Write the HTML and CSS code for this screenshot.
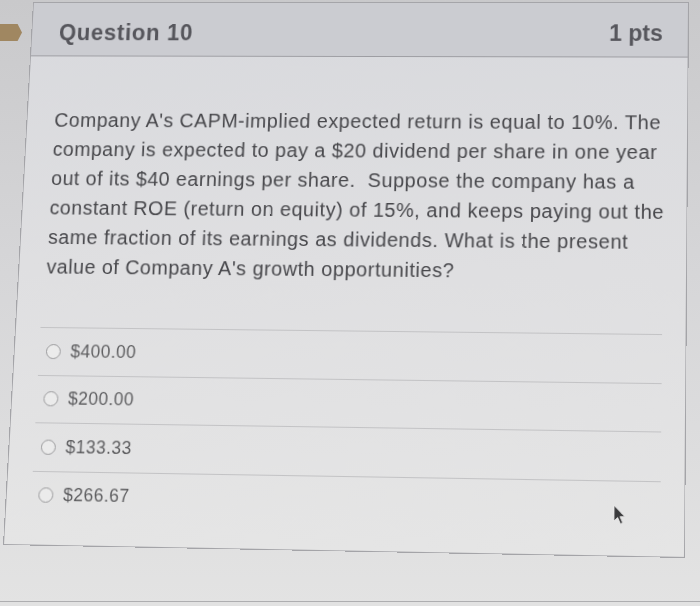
FILE: index.html
```html
<!DOCTYPE html>
<html lang="en">
<head>
<meta charset="utf-8">
<title>Question 10</title>
<link rel="stylesheet" href="styles.css">
</head>
<body>
<div class="page">
  <span class="marker"></span>
  <div class="question">
    <div class="q-header">
      <span class="q-title">Question 10</span>
      <span class="q-points">1 pts</span>
    </div>
    <div class="q-body">
      <p class="q-text">Company A's CAPM-implied expected return is equal to 10%. The company is expected to pay a $20 dividend per share in one year out of its $40 earnings per share.&nbsp; Suppose the company has a constant ROE (return on equity) of 15%, and keeps paying out the same fraction of its earnings as dividends. What is the present value of Company A's growth opportunities?</p>
      <ul class="answers">
        <li class="answer"><span class="radio"></span><span class="label">$400.00</span></li>
        <li class="answer"><span class="radio"></span><span class="label">$200.00</span></li>
        <li class="answer"><span class="radio"></span><span class="label">$133.33</span></li>
        <li class="answer"><span class="radio"></span><span class="label">$266.67</span></li>
      </ul>
    </div>
    <svg class="cursor" width="13" height="20" viewBox="0 0 13 20" aria-hidden="true">
      <path d="M1 1 L1 16 L4.6 12.6 L7.4 18.6 L9.6 17.6 L6.9 11.7 L11.6 11.7 Z" fill="#3a3a3c" stroke="#eeeeee" stroke-width="0.8"/>
    </svg>
  </div>
  <div class="next-question"></div>
</div>
</body>
</html>
```

FILE: styles.css
```css
html, body {
  margin: 0;
  padding: 0;
}

body {
  width: 700px;
  height: 606px;
  overflow: hidden;
  background: linear-gradient(to bottom, #c9c9cb 0%, #d6d6d8 45%, #e3e3e3 100%);
  font-family: "Liberation Sans", Arial, Helvetica, sans-serif;
}

.page {
  position: relative;
  padding-top: 2px;
}

.marker {
  position: absolute;
  left: 0;
  top: 24px;
  width: 22px;
  height: 17px;
  background: #a08761;
  clip-path: polygon(0 0, 80% 0, 100% 50%, 80% 100%, 0 100%);
}

.question {
  position: relative;
  box-sizing: border-box;
  width: 672px;
  height: 550px;
  margin-left: 16px;
  border: 1px solid #a4a4a8;
  background: linear-gradient(to bottom, #d8d9dd 0%, #dfdfe1 50%, #e5e5e5 100%);
  display: flex;
  flex-direction: column;
  transform-origin: 0 0;
  transform: matrix3d(0.953670, 0, 0, -0.00003346, -0.053642, 0.949505, 0, -0.00006955, 0, 0, 1, 0, 17, 0, 0, 1);
}

.q-header {
  box-sizing: border-box;
  height: 56px;
  padding: 18px 25px 0 28px;
  display: flex;
  justify-content: space-between;
  align-items: flex-start;
  background: #cbccd1;
  border-bottom: 1px solid #9d9da2;
}

.q-title,
.q-points {
  display: block;
  font-size: 23px;
  line-height: 26px;
  font-weight: bold;
  letter-spacing: 0.7px;
  color: #56565c;
}

.q-points {
  letter-spacing: 0;
}

.q-body {
  padding: 51px 15px 0 25px;
}

.q-text {
  margin: 0 0 46px;
  padding-left: 3px;
  font-size: 20px;
  line-height: 30px;
  letter-spacing: 0.55px;
  color: #48484c;
}

.answers {
  list-style: none;
  margin: 0;
  padding: 0 8px 0 0;
}

.answer {
  box-sizing: border-box;
  height: 47.5px;
  border-top: 1px solid #c3c3c5;
  padding-left: 7px;
  display: flex;
  align-items: center;
  gap: 10px;
}

.radio {
  box-sizing: border-box;
  width: 15px;
  height: 15px;
  border-radius: 50%;
  border: 1.5px solid #9b9b9d;
  background: #ebebeb;
  flex: none;
}

.label {
  font-size: 17.5px;
  letter-spacing: 0.5px;
  color: #5e5e60;
}

.cursor {
  position: absolute;
  left: 601px;
  top: 499px;
}

.next-question {
  margin-top: 49px;
  height: 8px;
  border-top: 1px solid #aeaeb0;
  background: #e2e2e2;
}
```
